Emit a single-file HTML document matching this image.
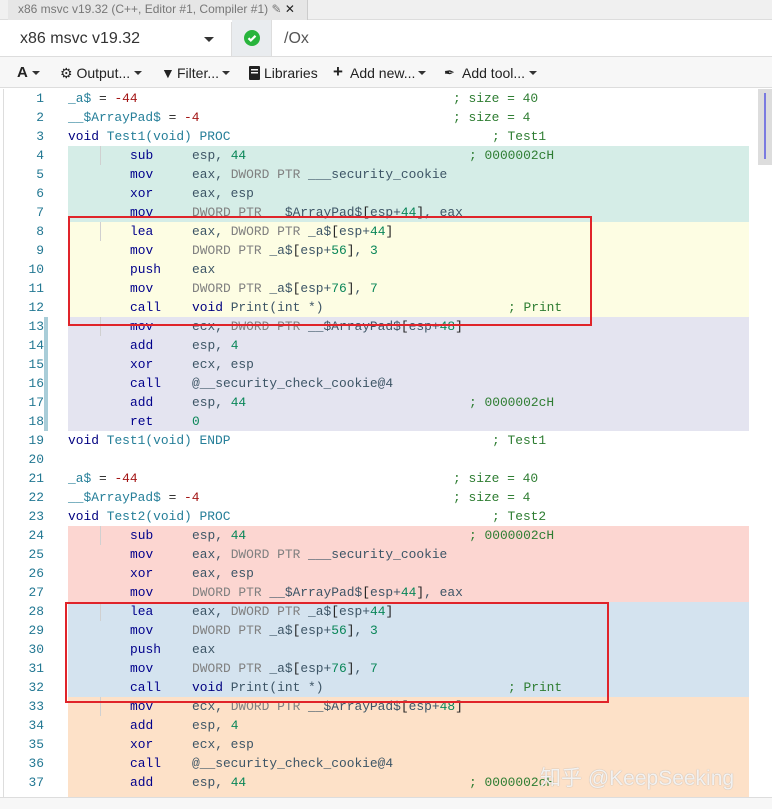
<!DOCTYPE html>
<html><head><meta charset="utf-8"><style>
*{margin:0;padding:0;box-sizing:border-box}
body{width:772px;height:809px;overflow:hidden;background:#fff;font-family:"Liberation Sans",sans-serif;position:relative}
.tabbar{position:absolute;left:0;top:0;width:772px;height:20px;background:#f0f0f0;border-bottom:1px solid #ddd}
.tab{position:absolute;left:8px;top:0;width:300px;height:20px;background:#e6e6e6;border-right:1px solid #ccc;font-size:12px;color:#777;padding:2px 0 0 10px;white-space:nowrap}
.row2{position:absolute;left:0;top:20px;width:772px;height:37px;background:#fff;border-bottom:1px solid #ddd}
.sel{position:absolute;left:10px;top:2px;width:222px;height:34px;border-right:1px solid #ddd;font-size:16px;color:#333;padding:8px 0 0 10px}
.caret{position:absolute;width:0;height:0;border-left:5px solid transparent;border-right:5px solid transparent;border-top:5px solid #333}
.chk{position:absolute;left:232px;top:0;width:40px;height:36px;background:#e9ecef;border-right:1px solid #ddd}
.chk div{position:absolute;left:12px;top:10px;width:16px;height:16px;border-radius:50%;background:#28b43c}
.opt{position:absolute;left:284px;top:10px;font-size:16px;color:#555}
.tb{position:absolute;left:0;top:57px;width:772px;height:31px;background:#f7f7f7;border-bottom:1px solid #ddd;font-size:14px;color:#222}
.tb span{position:absolute;top:8px;white-space:nowrap}
.code{position:absolute;left:0;top:89px;width:772px;height:708px;font-family:"Liberation Mono",monospace;font-size:12.9px;border-left:1px solid #ddd;margin-left:3px}
.l{position:absolute;left:0;width:750px;height:19px;line-height:19px;white-space:pre;color:#333}
.n{position:absolute;left:0;width:40px;text-align:right;color:#237893}
.c0{position:absolute;left:64px}
.m{position:absolute;left:126px;color:#00008b}
.o{position:absolute;left:188px;color:#3d5566}
.k{position:absolute;color:#2e7d32}
.bg{position:absolute;left:64px;width:681px;height:19px}
.bg::before{content:"";position:absolute;left:32px;top:0;width:1px;height:19px;background:#d0d0d0}
.g{color:#808080}.nu{color:#098658}.r{color:#a31515}.v{color:#000080}.t{color:#267f99}.b{color:#222}
.box{position:absolute;border:2px solid #e0242a}
.gut{position:absolute;left:40px;width:4px;background:#a9cdd8}
.foot{position:absolute;left:0;top:797px;width:772px;height:12px;background:#f7f7f7;border-top:1px solid #ddd}
.wm{position:absolute;left:540px;top:762px;font-size:21px;color:rgba(255,255,255,.85);font-family:"Liberation Sans","Noto Sans CJK SC",sans-serif;text-shadow:0 0 1px #999}
</style></head><body>
<div class="tabbar"><div class="tab">x86 msvc v19.32 (C++, Editor #1, Compiler #1) ✎ <b style="color:#222;font-weight:normal">✕</b></div></div>
<div class="row2">
<div class="sel">x86 msvc v19.32<div class="caret" style="left:194px;top:15px"></div></div>
<div class="chk"><div><svg width="16" height="16" viewBox="0 0 16 16"><path d="M4.5 8.2l2.3 2.3 4.7-4.7" stroke="#fff" stroke-width="2.2" fill="none"/></svg></div></div>
<div class="opt">/Ox</div>
</div>
<div class="tb">
<span style="left:17px;font-weight:bold;font-size:15px;top:7px">A</span><div class="caret" style="left:32px;top:14px;border-width:4px 4px 0"></div>
<span style="left:60px">⚙ Output...</span><div class="caret" style="left:134px;top:14px;border-width:4px 4px 0"></div>
<span style="left:161px">▼</span><span style="left:177px">Filter...</span><div class="caret" style="left:222px;top:14px;border-width:4px 4px 0"></div>
<span style="left:248px;top:9px"><svg width="12" height="14"><rect x="1" y="0" width="11" height="14" rx="1" fill="#222"/><rect x="3" y="3" width="7" height="1.5" fill="#f7f7f7"/><rect x="3" y="6" width="7" height="1.5" fill="#f7f7f7"/></svg></span><span style="left:264px">Libraries</span>
<span style="left:333px;font-weight:bold;font-size:17px;top:5px">+</span><span style="left:350px">Add new...</span><div class="caret" style="left:418px;top:14px;border-width:4px 4px 0"></div>
<span style="left:444px;font-size:13px">✒</span><span style="left:462px">Add tool...</span><div class="caret" style="left:529px;top:14px;border-width:4px 4px 0"></div>
</div>
<div class="code">
<div class="bg" style="top:57px;height:76px;background:#d5ede7"></div>
<div class="bg" style="top:133px;height:95px;background:#fdfde3"></div>
<div class="bg" style="top:228px;height:114px;background:#e4e4f0"></div>
<div class="bg" style="top:437px;height:76px;background:#fcd6d1"></div>
<div class="bg" style="top:513px;height:95px;background:#d4e3ef"></div>
<div class="bg" style="top:608px;height:100px;background:#fde1c8"></div>
<div class="gut" style="top:228px;height:114px"></div>
<div style="position:absolute;left:754px;top:0;width:15px;height:76px;background:#ddd"></div>
<div style="position:absolute;left:760px;top:4px;width:2px;height:66px;background:#7a7ae0"></div>

<div class="l" style="top:0"><span class="n">1</span><span class="c0"><span class="t">_a$</span> = <span class="r">-44</span></span><span class="k" style="left:449px">; size = 40</span></div>
<div class="l" style="top:19px"><span class="n">2</span><span class="c0"><span class="t">__$ArrayPad$</span> = <span class="r">-4</span></span><span class="k" style="left:449px">; size = 4</span></div>
<div class="l" style="top:38px"><span class="n">3</span><span class="c0"><span class="v">void</span> <span class="t">Test1(void)</span> <span class="t">PROC</span></span><span class="k" style="left:488px">; Test1</span></div>
<div class="l" style="top:57px"><span class="n">4</span><span class="m">sub</span><span class="o">esp, <span class="nu">44</span></span><span class="k" style="left:465px">; 0000002cH</span></div>
<div class="l" style="top:76px"><span class="n">5</span><span class="m">mov</span><span class="o">eax, <span class="g">DWORD PTR</span> ___security_cookie</span></div>
<div class="l" style="top:95px"><span class="n">6</span><span class="m">xor</span><span class="o">eax, esp</span></div>
<div class="l" style="top:114px"><span class="n">7</span><span class="m">mov</span><span class="o"><span class="g">DWORD PTR</span> __$ArrayPad$<span class="b">[</span>esp+<span class="nu">44</span><span class="b">]</span>, eax</span></div>
<div class="l" style="top:133px"><span class="n">8</span><span class="m">lea</span><span class="o">eax, <span class="g">DWORD PTR</span> _a$<span class="b">[</span>esp+<span class="nu">44</span><span class="b">]</span></span></div>
<div class="l" style="top:152px"><span class="n">9</span><span class="m">mov</span><span class="o"><span class="g">DWORD PTR</span> _a$<span class="b">[</span>esp+<span class="nu">56</span><span class="b">]</span>, <span class="nu">3</span></span></div>
<div class="l" style="top:171px"><span class="n">10</span><span class="m">push</span><span class="o">eax</span></div>
<div class="l" style="top:190px"><span class="n">11</span><span class="m">mov</span><span class="o"><span class="g">DWORD PTR</span> _a$<span class="b">[</span>esp+<span class="nu">76</span><span class="b">]</span>, <span class="nu">7</span></span></div>
<div class="l" style="top:209px"><span class="n">12</span><span class="m">call</span><span class="o"><span class="v">void</span> Print(int *)</span><span class="k" style="left:504px">; Print</span></div>
<div class="l" style="top:228px"><span class="n">13</span><span class="m">mov</span><span class="o">ecx, <span class="g">DWORD PTR</span> __$ArrayPad$<span class="b">[</span>esp+<span class="nu">48</span><span class="b">]</span></span></div>
<div class="l" style="top:247px"><span class="n">14</span><span class="m">add</span><span class="o">esp, <span class="nu">4</span></span></div>
<div class="l" style="top:266px"><span class="n">15</span><span class="m">xor</span><span class="o">ecx, esp</span></div>
<div class="l" style="top:285px"><span class="n">16</span><span class="m">call</span><span class="o">@__security_check_cookie@4</span></div>
<div class="l" style="top:304px"><span class="n">17</span><span class="m">add</span><span class="o">esp, <span class="nu">44</span></span><span class="k" style="left:465px">; 0000002cH</span></div>
<div class="l" style="top:323px"><span class="n">18</span><span class="m">ret</span><span class="o"><span class="nu">0</span></span></div>
<div class="l" style="top:342px"><span class="n">19</span><span class="c0"><span class="v">void</span> <span class="t">Test1(void)</span> <span class="t">ENDP</span></span><span class="k" style="left:488px">; Test1</span></div>
<div class="l" style="top:361px"><span class="n">20</span></div>
<div class="l" style="top:380px"><span class="n">21</span><span class="c0"><span class="t">_a$</span> = <span class="r">-44</span></span><span class="k" style="left:449px">; size = 40</span></div>
<div class="l" style="top:399px"><span class="n">22</span><span class="c0"><span class="t">__$ArrayPad$</span> = <span class="r">-4</span></span><span class="k" style="left:449px">; size = 4</span></div>
<div class="l" style="top:418px"><span class="n">23</span><span class="c0"><span class="v">void</span> <span class="t">Test2(void)</span> <span class="t">PROC</span></span><span class="k" style="left:488px">; Test2</span></div>
<div class="l" style="top:437px"><span class="n">24</span><span class="m">sub</span><span class="o">esp, <span class="nu">44</span></span><span class="k" style="left:465px">; 0000002cH</span></div>
<div class="l" style="top:456px"><span class="n">25</span><span class="m">mov</span><span class="o">eax, <span class="g">DWORD PTR</span> ___security_cookie</span></div>
<div class="l" style="top:475px"><span class="n">26</span><span class="m">xor</span><span class="o">eax, esp</span></div>
<div class="l" style="top:494px"><span class="n">27</span><span class="m">mov</span><span class="o"><span class="g">DWORD PTR</span> __$ArrayPad$<span class="b">[</span>esp+<span class="nu">44</span><span class="b">]</span>, eax</span></div>
<div class="l" style="top:513px"><span class="n">28</span><span class="m">lea</span><span class="o">eax, <span class="g">DWORD PTR</span> _a$<span class="b">[</span>esp+<span class="nu">44</span><span class="b">]</span></span></div>
<div class="l" style="top:532px"><span class="n">29</span><span class="m">mov</span><span class="o"><span class="g">DWORD PTR</span> _a$<span class="b">[</span>esp+<span class="nu">56</span><span class="b">]</span>, <span class="nu">3</span></span></div>
<div class="l" style="top:551px"><span class="n">30</span><span class="m">push</span><span class="o">eax</span></div>
<div class="l" style="top:570px"><span class="n">31</span><span class="m">mov</span><span class="o"><span class="g">DWORD PTR</span> _a$<span class="b">[</span>esp+<span class="nu">76</span><span class="b">]</span>, <span class="nu">7</span></span></div>
<div class="l" style="top:589px"><span class="n">32</span><span class="m">call</span><span class="o"><span class="v">void</span> Print(int *)</span><span class="k" style="left:504px">; Print</span></div>
<div class="l" style="top:608px"><span class="n">33</span><span class="m">mov</span><span class="o">ecx, <span class="g">DWORD PTR</span> __$ArrayPad$<span class="b">[</span>esp+<span class="nu">48</span><span class="b">]</span></span></div>
<div class="l" style="top:627px"><span class="n">34</span><span class="m">add</span><span class="o">esp, <span class="nu">4</span></span></div>
<div class="l" style="top:646px"><span class="n">35</span><span class="m">xor</span><span class="o">ecx, esp</span></div>
<div class="l" style="top:665px"><span class="n">36</span><span class="m">call</span><span class="o">@__security_check_cookie@4</span></div>
<div class="l" style="top:684px"><span class="n">37</span><span class="m">add</span><span class="o">esp, <span class="nu">44</span></span><span class="k" style="left:465px">; 0000002cH</span></div>
</div>
<div class="box" style="left:68px;top:216px;width:524px;height:110px"></div>
<div class="box" style="left:65px;top:602px;width:544px;height:101px"></div>
<div class="wm">知乎 @KeepSeeking</div>
<div class="foot"></div>
</body></html>
